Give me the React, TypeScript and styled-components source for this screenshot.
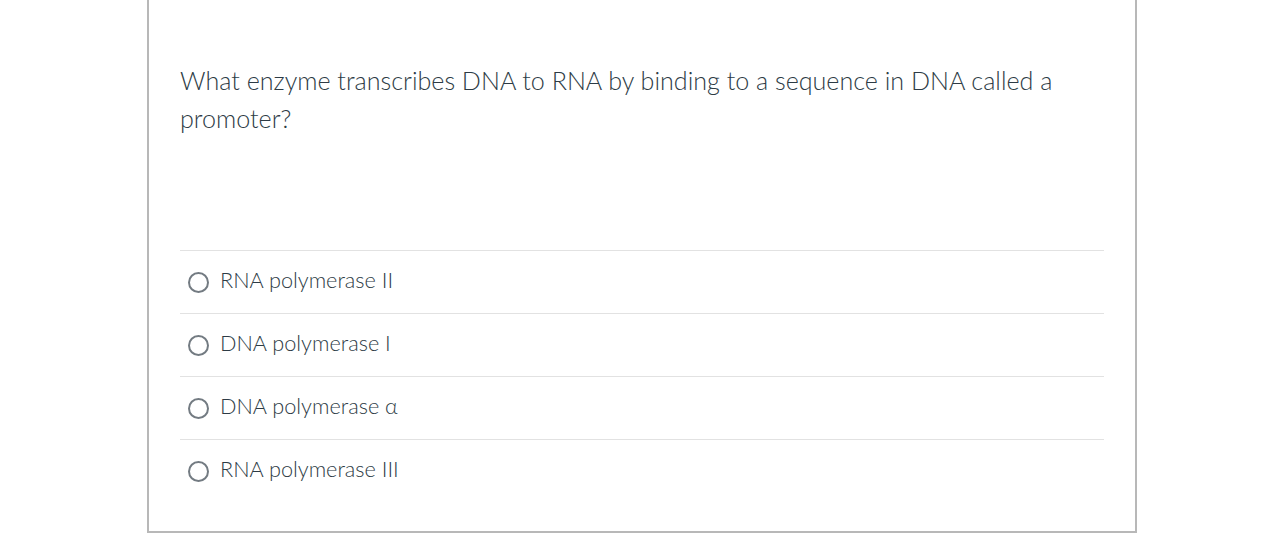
import React from 'react'
import styled, { createGlobalStyle } from 'styled-components'

const GlobalStyle = createGlobalStyle`
  html, body {
    margin: 0;
    padding: 0;
    background: #ffffff;
  }
  body {
    font-family: Lato, "Open Sans", sans-serif;
    color: #2d3b45;
  }
`

const answers = [
  'RNA polymerase II',
  'DNA polymerase I',
  'DNA polymerase \u03b1',
  'RNA polymerase III',
]

const Page = styled.div`
  padding-left: 147px;
  width: 1284px;
  box-sizing: border-box;
`

const Card = styled.div`
  width: 990px;
  box-sizing: border-box;
  margin-top: -2px;
  border: 2px solid #b8b8b8;
  padding: 61px 31px 29px 31px;
  background: #fff;
`

const Question = styled.p`
  margin: 0;
  font-size: 25.1px;
  line-height: 38px;
  font-weight: 300;
  color: #2d3b45;
  padding-right: 20px;
`

const AnswerList = styled.div`
  margin-top: 113px;
  display: flex;
  flex-direction: column;
`

const AnswerRow = styled.label`
  display: flex;
  align-items: center;
  gap: 11px;
  height: 63px;
  padding-bottom: 3px;
  box-sizing: border-box;
  border-top: 1px solid #e2e2e2;
  padding-left: 8px;
  cursor: pointer;
`

const Radio = styled.span`
  width: 17px;
  height: 17px;
  border-radius: 50%;
  border: 2px solid #737b82;
  flex: none;
  margin-top: 3px;
`

const AnswerText = styled.span`
  font-size: 21.7px;
  line-height: 24px;
  font-weight: 300;
  color: #2d3b45;
  margin-top: -1px;
`

export default function App() {
  return (
    <>
      <GlobalStyle />
      <Page>
        <Card>
          <Question>
            What enzyme transcribes DNA to RNA by binding to a sequence in DNA called a promoter?
          </Question>
          <AnswerList>
            {answers.map((a) => (
              <AnswerRow key={a}>
                <Radio />
                <AnswerText>{a}</AnswerText>
              </AnswerRow>
            ))}
          </AnswerList>
        </Card>
      </Page>
    </>
  )
}
